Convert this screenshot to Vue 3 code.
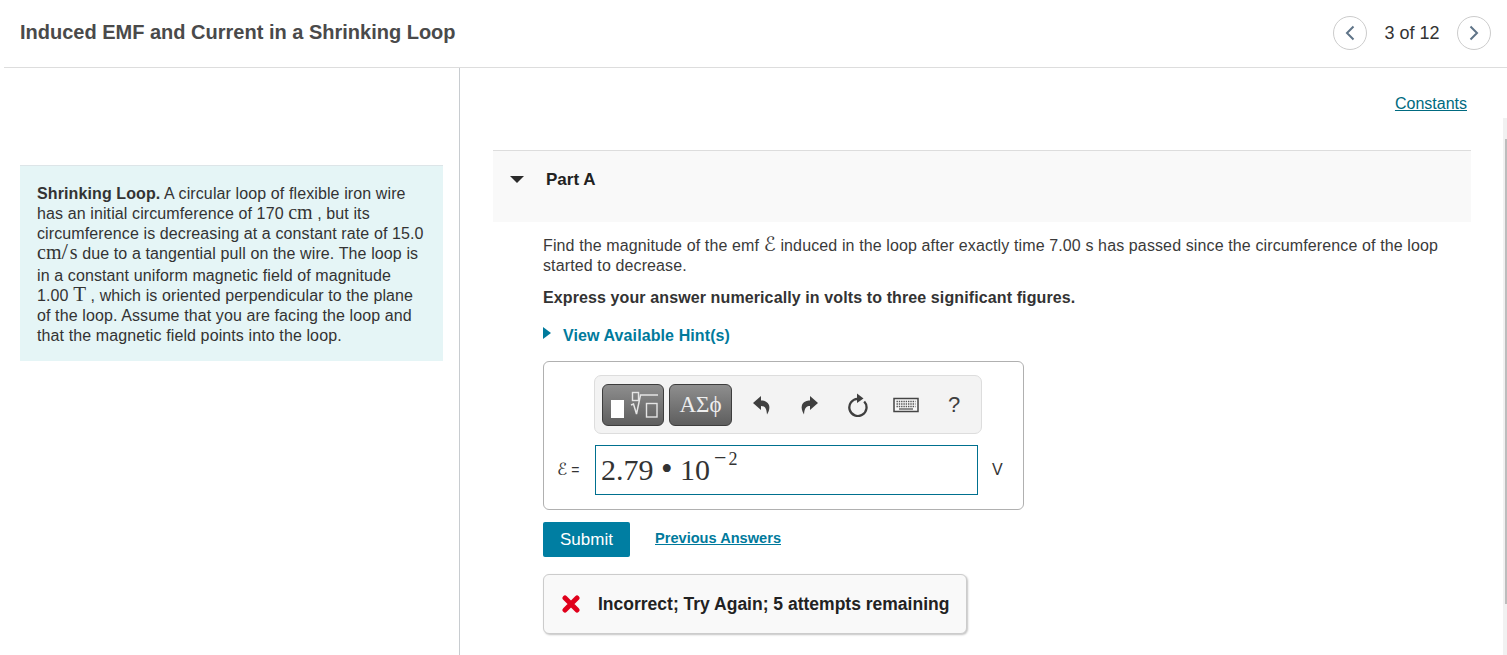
<template>
  <div class="page">
    <header class="top-bar">
      <h1 class="item-title">Induced EMF and Current in a Shrinking Loop</h1>
      <div class="pager">
        <button class="pager-btn">
          <svg width="12" height="16" viewBox="0 0 12 16"><path d="M9.5 1.5 L3 8 L9.5 14.5" fill="none" stroke="#5f7488" stroke-width="2" /></svg>
        </button>
        <span class="pager-text">3 of 12</span>
        <button class="pager-btn">
          <svg width="12" height="16" viewBox="0 0 12 16"><path d="M2.5 1.5 L9 8 L2.5 14.5" fill="none" stroke="#5f7488" stroke-width="2" /></svg>
        </button>
      </div>
    </header>

    <div class="columns">
      <aside class="left-pane">
        <div class="intro">
          <div>
            <b>Shrinking Loop.</b> A circular loop of flexible iron wire<br />
            has an initial circumference of 170 <span class="math">cm</span> , but its<br />
            circumference is decreasing at a constant rate of 15.0<br />
            <span class="math">cm<span class="slash">/</span>s</span> due to a tangential pull on the wire. The loop is
          </div>
          <div class="intro-rest">
            in a constant uniform magnetic field of magnitude<br />
            1.00 <span class="math big">T</span> , which is oriented perpendicular to the plane<br />
            of the loop. Assume that you are facing the loop and<br />
            that the magnetic field points into the loop.
          </div>
        </div>
      </aside>

      <main class="right-pane">
        <div class="constants-row"><a class="constants">Constants</a></div>

        <section class="part-head">
          <span class="caret-down"></span>
          <span class="part-name">Part A</span>
        </section>

        <div class="part-body">
          <p class="question">
            Find the magnitude of the emf <span class="script">ℰ</span> induced in the loop after exactly time 7.00 s has passed since the circumference of the loop started to decrease.
          </p>
          <p class="instruction">Express your answer numerically in volts to three significant figures.</p>
          <div class="hint-row">
            <span class="caret-right"></span>
            <a class="hint-link">View Available Hint(s)</a>
          </div>

          <div class="answer-box">
            <div class="toolbar">
              <button class="tpl-btn">
                <svg width="60" height="40" viewBox="0 0 60 40">
                  <rect x="8" y="15" width="13" height="18" fill="#fff" />
                  <rect x="29.5" y="7.5" width="6" height="8" fill="none" stroke="#e4e4e4" stroke-width="1.4" />
                  <path d="M28 20 L30.5 19 L33.5 29 L37.5 10 H55" fill="none" stroke="#e4e4e4" stroke-width="1.5" />
                  <rect x="43.5" y="18.5" width="10.5" height="13.5" fill="none" stroke="#e4e4e4" stroke-width="1.4" />
                </svg>
              </button>
              <button class="tpl-btn greek">ΑΣϕ</button>
              <span class="tool-icon first">
                <svg width="20" height="20" viewBox="0 0 20 20"><path d="M10 1 L2 8 L10 15 V11 C13 11 15.5 12 16 19.5 C18 16 19 13 18 10 C16.5 6.5 13 5.5 10 5.5 Z" fill="#3f3f3f" /></svg>
              </span>
              <span class="tool-icon">
                <svg width="20" height="20" viewBox="0 0 20 20"><g transform="translate(20 0) scale(-1 1)"><path d="M10 1 L2 8 L10 15 V11 C13 11 15.5 12 16 19.5 C18 16 19 13 18 10 C16.5 6.5 13 5.5 10 5.5 Z" fill="#3f3f3f" /></g></svg>
              </span>
              <span class="tool-icon">
                <svg width="22" height="24" viewBox="0 0 22 24"><path d="M17.2 8.5 A8.6 8.6 0 1 1 10.5 5.8" fill="none" stroke="#3f3f3f" stroke-width="2.3" /><path d="M10 0.5 L16.5 5.5 L10 10 Z" fill="#3f3f3f" /></svg>
              </span>
              <span class="tool-icon">
                <svg width="26" height="16" viewBox="0 0 26 16">
                  <rect x="1" y="1.5" width="24" height="13" fill="#f8f8f8" stroke="#444" stroke-width="1.5" />
                  <path d="M3.5 4.5 H22.5 M3.5 7 H22.5 M3.5 9.5 H22.5" stroke="#555" stroke-width="1.3" stroke-dasharray="1.4 .9" />
                  <path d="M6 12 H20" stroke="#555" stroke-width="1.3" />
                </svg>
              </span>
              <span class="tool-icon help">?</span>
            </div>
            <div class="input-row">
              <span class="label"><span class="script">ℰ</span> =</span>
              <div class="math-input">2.79 <span class="dot">•</span> 10<sup><span class="minus">−</span>2</sup></div>
              <span class="unit">V</span>
            </div>
          </div>

          <div class="submit-row">
            <button class="submit">Submit</button>
            <a class="prev-link">Previous Answers</a>
          </div>

          <div class="feedback">
            <svg width="18" height="18" viewBox="0 0 18 18"><path d="M3 3 L15 15 M15 3 L3 15" stroke="#e0001b" stroke-width="5" stroke-linecap="round" /></svg>
            <span>Incorrect; Try Again; 5 attempts remaining</span>
          </div>
        </div>
      </main>
    </div>
    <div class="scroll-track"><div class="scroll-thumb"></div></div>
  </div>
</template>

<script setup>
</script>

<style>
html, body {
  margin: 0;
  background: #ffffff;
  overflow: hidden;
}
</style>

<style scoped>
.page {
  position: relative;
  width: 1507px;
  height: 655px;
  overflow: hidden;
  font-family: "Liberation Sans", Arial, sans-serif;
  color: #333333;
  font-size: 16px;
}

.top-bar {
  height: 65px;
  margin-left: 4px;
  padding: 0 16px 2px 16px;
  border-bottom: 1px solid #dddddd;
  display: flex;
  align-items: center;
  justify-content: space-between;
}

.item-title {
  margin: 0;
  font-size: 20px;
  font-weight: 700;
  color: #4a4a4a;
}

.pager {
  display: flex;
  align-items: center;
  gap: 17.5px;
}

.pager-btn {
  width: 34px;
  height: 34px;
  padding: 0;
  border: 1px solid #cccccc;
  border-radius: 50%;
  background: #ffffff;
  display: flex;
  align-items: center;
  justify-content: center;
}

.pager-text {
  margin-top: 2px;
  font-size: 18px;
  color: #333333;
}

.columns {
  display: flex;
  height: 587px;
}

.left-pane {
  width: 423px;
  border-right: 1px solid #c8ccd0;
  padding: 97px 16px 0 20px;
}

.intro {
  background: #e5f5f6;
  border-top: 1px solid #dde5e8;
  padding: 18px 17px 15px;
  font-size: 16px;
  line-height: 20px;
  letter-spacing: 0.11px;
}

.intro-rest {
  margin-top: 2px;
}

.math {
  font-family: "Liberation Serif", serif;
  font-size: 20px;
  line-height: 0;
  letter-spacing: 0;
}

.math.big {
  font-size: 21px;
}

.slash {
  font-size: 23px;
  line-height: 0;
  letter-spacing: 2px;
}

.right-pane {
  flex: 1;
  padding: 0 36px 0 33px;
}

.constants-row {
  height: 82px;
  display: flex;
  justify-content: flex-end;
  padding: 26px 4px 0 0;
  box-sizing: border-box;
  line-height: 19px;
}

.constants {
  color: #006a80;
  text-decoration: underline;
  font-size: 16px;
}

.part-head {
  height: 72px;
  background: #f9f9f9;
  border-top: 1px solid #dddddd;
  box-sizing: border-box;
  display: flex;
  align-items: flex-start;
  padding: 19px 0 0 17px;
}

.caret-down {
  width: 0;
  height: 0;
  margin-top: 6px;
  border-left: 7px solid transparent;
  border-right: 7px solid transparent;
  border-top: 7px solid #2b2b2b;
}

.part-name {
  margin-left: 22px;
  font-size: 17px;
  font-weight: 700;
  color: #222222;
  line-height: 19px;
}

.part-body {
  padding: 14px 0 0 50px;
}

.question {
  margin: 0;
  font-size: 16px;
  line-height: 20px;
  letter-spacing: 0.12px;
  color: #3a3a3a;
}

.script {
  font-family: "DejaVu Sans", "Liberation Serif", serif;
  font-size: 20px;
  line-height: 0;
}

.instruction {
  margin: 11px 0 0;
  font-size: 16px;
  font-weight: 700;
  line-height: 21px;
  letter-spacing: 0.11px;
  color: #333333;
}

.hint-row {
  margin-top: 17px;
  display: flex;
  align-items: center;
  height: 21px;
}

.caret-right {
  width: 0;
  height: 0;
  margin-top: -5px;
  border-top: 6.5px solid transparent;
  border-bottom: 6.5px solid transparent;
  border-left: 8px solid #007a9c;
}

.hint-link {
  margin-left: 12px;
  color: #007a9c;
  font-weight: 700;
  font-size: 16px;
  letter-spacing: 0.1px;
}

.answer-box {
  width: 481px;
  height: 149px;
  margin-top: 15px;
  box-sizing: border-box;
  border: 1px solid #b0b0b0;
  border-radius: 6px;
  padding: 13px 0 0 11px;
}

.toolbar {
  width: 388px;
  height: 59px;
  margin-left: 39px;
  box-sizing: border-box;
  background: #f3f3f3;
  border: 1px solid #dddddd;
  border-radius: 7px;
  display: flex;
  align-items: center;
  padding: 0 0 0 7px;
}

.tpl-btn {
  height: 42px;
  width: 62px;
  padding: 0;
  border: 1px solid #3d3d3d;
  border-radius: 6px;
  background: linear-gradient(#8e8e8e, #5e5e5e);
  color: #eeeeee;
  display: flex;
  align-items: center;
  justify-content: center;
  overflow: hidden;
}

.tpl-btn svg {
  display: block;
}

.greek {
  width: 63px;
  margin-left: 5px;
  font-family: "Liberation Serif", serif;
  font-size: 23px;
}

.tool-icon {
  width: 48px;
  display: flex;
  justify-content: center;
  align-items: center;
  color: #3f3f3f;
}

.tool-icon.first {
  margin-left: 6px;
}

.tool-icon.first svg {
  margin-left: -2px;
}

.help {
  font-size: 22px;
}

.input-row {
  margin-top: 11px;
  display: flex;
  align-items: center;
  height: 50px;
}

.label {
  width: 40px;
  flex-shrink: 0;
  padding-left: 2px;
  box-sizing: border-box;
  font-size: 14px;
  color: #333333;
  white-space: nowrap;
}

.label .script {
  font-size: 17px;
}

.math-input {
  width: 383px;
  height: 50px;
  box-sizing: border-box;
  border: 1px solid #00708f;
  font-family: "Liberation Serif", serif;
  font-size: 30px;
  line-height: 48px;
  padding-left: 5px;
  color: #333333;
  white-space: nowrap;
}

.dot {
  font-size: 33px;
  line-height: 0;
}

.math-input sup {
  font-size: 18px;
  line-height: 0;
  vertical-align: 15px;
  margin-left: 4px;
}

.minus {
  font-size: 22px;
  margin-right: 2px;
}

.unit {
  margin-left: 14px;
  font-size: 16px;
  color: #333333;
}

.submit-row {
  margin-top: 12px;
  display: flex;
  align-items: center;
}

.submit {
  width: 87px;
  height: 35px;
  padding: 0;
  border: none;
  border-radius: 2px;
  background: #007ea2;
  color: #ffffff;
  font-family: inherit;
  font-size: 17px;
}

.prev-link {
  margin: 0 0 3px 25px;
  color: #007a9c;
  font-size: 14.6px;
  font-weight: 700;
  text-decoration: underline;
}

.feedback {
  margin-top: 17px;
  width: 424px;
  height: 60px;
  box-sizing: border-box;
  background: #f9f9f9;
  border: 1px solid #cccccc;
  border-radius: 6px;
  box-shadow: 1px 1px 2px #c4c4c4;
  display: flex;
  align-items: center;
  padding-left: 18px;
  gap: 18px;
  font-size: 17.5px;
  font-weight: 700;
  color: #222222;
  white-space: nowrap;
}

.scroll-track {
  position: absolute;
  right: 0;
  top: 118px;
  bottom: 0;
  width: 4px;
  background: #f1f1f1;
}

.scroll-thumb {
  position: absolute;
  right: 0;
  top: 21px;
  width: 2px;
  height: 465px;
  background: #bdbdbd;
}
</style>
